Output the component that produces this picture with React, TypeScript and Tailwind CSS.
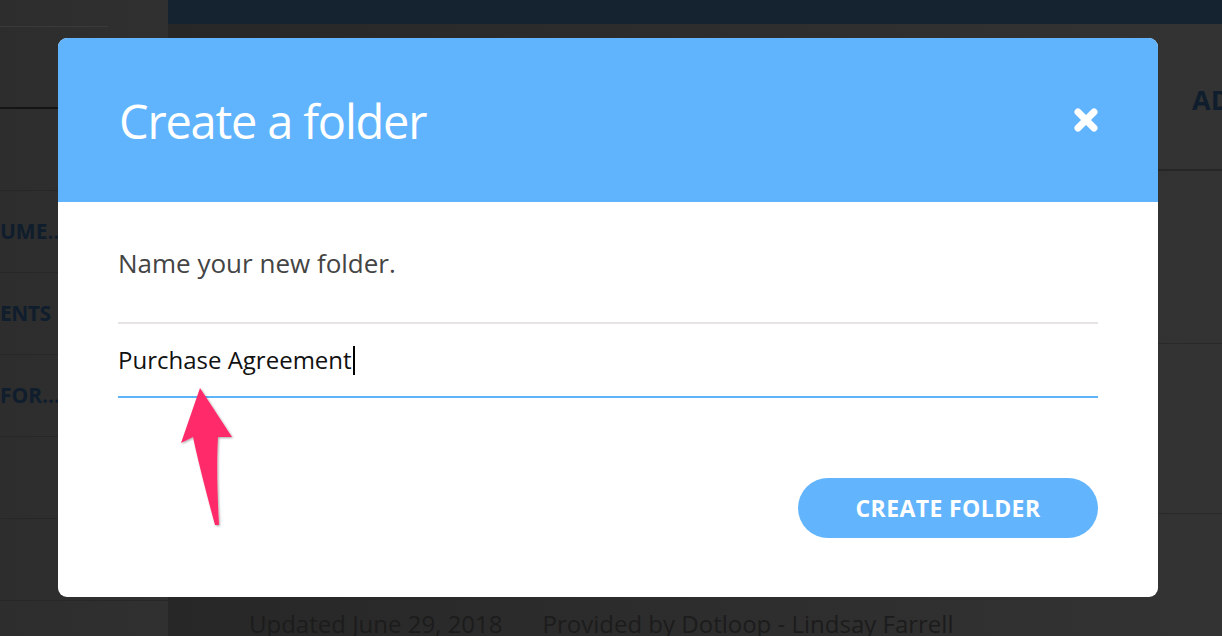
import React from "react";

export default function App() {
  const font = { fontFamily: '"Open Sans", "Liberation Sans", sans-serif' };
  return (
    <div
      className="relative w-[1222px] h-[636px] overflow-hidden flex bg-[#2c2c2c]"
      style={font}
    >
      {/* Sidebar */}
      <aside className="w-[168px] shrink-0 flex flex-col bg-gradient-to-r from-[#2d2d2d] to-[#303030]">
        <div className="h-[27px] border-b border-[#3a3a3a] w-[108px]" />
        <div className="h-[82px] border-b-2 border-[#141414]" />
        <div className="h-[82px] border-b border-[#272727]" />
        <div className="h-[82px] border-b border-[#272727] flex items-center">
          <span className="text-[21px] font-bold text-[#0f1d2d] whitespace-nowrap">UME...</span>
        </div>
        <div className="h-[82px] border-b border-[#272727] flex items-center">
          <span className="text-[21px] font-bold text-[#0f1d2d] whitespace-nowrap tracking-[-0.5px]">ENTS</span>
        </div>
        <div className="h-[82px] border-b border-[#272727] flex items-center">
          <span className="text-[21px] font-bold text-[#0f1d2d] whitespace-nowrap">FOR...</span>
        </div>
        <div className="h-[82px] border-b border-[#272727]" />
        <div className="h-[82px] border-b border-[#272727]" />
      </aside>

      {/* Main */}
      <main className="flex-1 flex flex-col bg-gradient-to-r from-[#272727] to-[#333333]">
        <div className="h-[24px] bg-[#15222f]" />
        <div className="h-[148px] border-b-2 border-[#262626] flex items-center justify-end">
          <span className="text-[27px] font-bold text-[#0f1d2d] whitespace-nowrap w-[30px] overflow-hidden mt-[8px]">AD</span>
        </div>
        <div className="h-[173px] border-b border-[#292929]" />
        <div className="h-[171px] border-b border-[#292929]" />
        <div className="flex-1 pl-[81px] pt-[98px]">
          <div className="flex gap-[40px] text-[24px] text-[#1c1c1c] whitespace-nowrap leading-none">
            <span>Updated June 29, 2018</span>
            <span>Provided by Dotloop - Lindsay Farrell</span>
          </div>
        </div>
      </main>

      {/* Modal */}
      <div className="absolute left-[58px] top-[38px] w-[1100px] h-[559px] bg-white rounded-[9px] overflow-hidden flex flex-col">
        <div className="h-[164px] bg-[#60b4fe] flex items-center justify-between pl-[61px] pr-[60px]">
          <h1 className="text-[47px] text-white tracking-[-1.2px] leading-none pt-[2px]">Create a folder</h1>
          <svg width="24" height="24" viewBox="0 0 24 24">
            <path d="M4 4 L20 20 M20 4 L4 20" stroke="#ffffff" strokeWidth="7" strokeLinecap="round" />
          </svg>
        </div>
        <div className="flex-1 px-[60px] pt-[48px] flex flex-col">
          <p className="text-[26px] text-[#444444] leading-none">Name your new folder.</p>
          <div className="mt-[46px] border-t-2 border-[#e8e4e6]" />
          <div className="h-[74px] border-b-2 border-[#5fb3f9] flex items-center">
            <span className="text-[24px] text-[#111111] leading-none">Purchase Agreement</span>
            <span className="w-[2px] h-[29px] bg-black ml-[1px]" />
          </div>
          <div className="flex justify-end mt-[80px]">
            <button className="w-[300px] h-[60px] rounded-full bg-[#62b5fd] text-white font-bold text-[23px] tracking-[0.4px]">
              CREATE FOLDER
            </button>
          </div>
        </div>
      </div>

      {/* Pink arrow annotation */}
      <svg
        className="absolute left-0 top-0 pointer-events-none"
        width="1222"
        height="636"
        viewBox="0 0 1222 636"
      >
        <defs>
          <filter id="sh" x="-20%" y="-20%" width="140%" height="140%">
            <feDropShadow dx="1" dy="1" stdDeviation="1" floodColor="#000" floodOpacity="0.35" />
          </filter>
        </defs>
        <path
          d="M200 388 L232 437 L218 437 Q216 470 219 525 L215 525 Q200 470 193 437 L181 443 Z"
          fill="#fe2c6b"
          filter="url(#sh)"
        />
      </svg>
    </div>
  );
}
